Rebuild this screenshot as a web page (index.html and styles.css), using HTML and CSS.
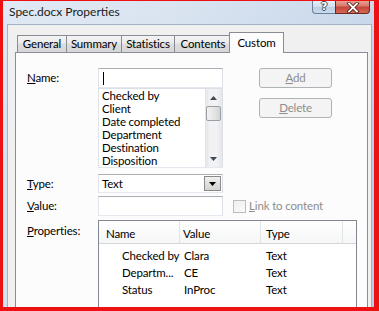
FILE: index.html
```html
<!DOCTYPE html>
<html>
<head>
<meta charset="utf-8">
<title>Spec.docx Properties</title>
<link rel="stylesheet" href="styles.css">
</head>
<body>
<div class="window">
  <div class="titlebar">
    <span class="title">Spec.docx Properties</span>
    <div class="caption-buttons">
      <div class="btn-help">?</div>
      <div class="btn-close">
        <svg width="14" height="11" viewBox="0 0 14 11">
          <path d="M3 1.5 L11 9.5 M11 1.5 L3 9.5" stroke="#4a1a14" stroke-width="3.4" stroke-linecap="square" fill="none"/>
          <path d="M3 1.5 L11 9.5 M11 1.5 L3 9.5" stroke="#ffffff" stroke-width="1.8" stroke-linecap="square" fill="none"/>
        </svg>
      </div>
    </div>
  </div>
  <div class="client">
    <div class="tabs">
      <div class="tab w-general">General</div>
      <div class="tab w-summary">Summary</div>
      <div class="tab w-statistics">Statistics</div>
      <div class="tab w-contents">Contents</div>
      <div class="tab selected">Custom</div>
    </div>
    <div class="panel">
      <div class="form">
        <div class="lbl lbl-name"><u>N</u>ame:</div>
        <div class="textbox name-box"><span class="caret"></span></div>
        <div class="actions">
          <div class="button"><u>A</u>dd</div>
          <div class="button"><u>D</u>elete</div>
        </div>
        <div class="listbox">
          <div class="items">
            <div>Checked by</div>
            <div>Client</div>
            <div>Date completed</div>
            <div>Department</div>
            <div>Destination</div>
            <div>Disposition</div>
          </div>
          <div class="vscroll">
            <div class="sb-arrow"><svg width="7" height="4" viewBox="0 0 7 4"><path d="M0 4 L3.5 0 L7 4 Z" fill="#404a58"/></svg></div>
            <div class="sb-thumb"></div>
            <div class="sb-track"></div>
            <div class="sb-arrow"><svg width="7" height="4" viewBox="0 0 7 4"><path d="M0 0 L7 0 L3.5 4 Z" fill="#404a58"/></svg></div>
          </div>
        </div>

        <div class="lbl row-type"><u>T</u>ype:</div>
        <div class="combo row-type">
          <span class="combo-text">Text</span>
          <div class="combo-btn"><svg width="7" height="4" viewBox="0 0 7 4"><path d="M0 0 L7 0 L3.5 4 Z" fill="#000"/></svg></div>
        </div>

        <div class="lbl row-value"><u>V</u>alue:</div>
        <div class="textbox row-value value-box"></div>
        <div class="check row-value">
          <span class="checkbox"></span>
          <span class="check-text"><u>L</u>ink to content</span>
        </div>

        <div class="lbl lbl-props"><u>P</u>roperties:</div>
        <div class="listview">
          <div class="lv-head">
            <div class="hc c-name">Name</div>
            <div class="hc c-value">Value</div>
            <div class="hc c-type">Type</div>
            <div class="hc c-rest"></div>
          </div>
          <div class="lv-body">
            <div class="lv-row"><span class="c-name">Checked by</span><span class="c-value">Clara</span><span class="c-type">Text</span></div>
            <div class="lv-row"><span class="c-name">Departm...</span><span class="c-value">CE</span><span class="c-type">Text</span></div>
            <div class="lv-row"><span class="c-name">Status</span><span class="c-value">InProc</span><span class="c-type">Text</span></div>
          </div>
        </div>
      </div>
    </div>
  </div>
</div>
</body>
</html>
```
FILE: styles.css
```css
* { box-sizing: border-box; }
html, body { margin: 0; padding: 0; }
body {
  width: 379px;
  height: 311px;
  overflow: hidden;
  background: #ee1111;
  font-family: Lato, "Open Sans", "Liberation Sans", sans-serif;
  font-size: 11.5px;
  letter-spacing: -0.15px;
  color: #000;
}
.window {
  margin: 1px 5px 0 3px;
  height: 306px;
  overflow: hidden;
  display: flex;
  flex-direction: column;
  background:
    linear-gradient(180deg, rgba(255,255,255,0.25), rgba(255,255,255,0) 55%),
    linear-gradient(90deg, #d6e2f0 0%, #cfdcec 45%, #b9cde6 100%);
}
.titlebar {
  height: 23px;
  flex-shrink: 0;
  display: flex;
  align-items: flex-start;
}
.title {
  padding: 3px 0 0 6px;
  line-height: 16px;
  font-size: 12px;
  letter-spacing: 0;
  color: #1b1b1b;
}
.caption-buttons {
  margin-left: auto;
  margin-right: 4px;
  display: flex;
  margin-top: -1px;
}
.btn-help {
  width: 23px;
  height: 14px;
  border: 1px solid #6f7f95;
  border-top: none;
  border-right: none;
  border-radius: 0 0 0 4px;
  background: linear-gradient(180deg, #eaf1f9 0%, #d3e0ef 50%, #b9cce3 51%, #c9dbef 100%);
  color: #fff;
  font-family: "DejaVu Sans", sans-serif;
  font-weight: bold;
  font-size: 11px;
  line-height: 13px;
  text-align: center;
  text-shadow: 1px 0 0 #3c4a5c, -1px 0 0 #3c4a5c, 0 1px 0 #3c4a5c, 0 -1px 0 #3c4a5c;
}
.btn-close {
  width: 35px;
  height: 14px;
  border: 1px solid #6b2a20;
  border-top: none;
  border-radius: 0 0 4px 0;
  background: linear-gradient(180deg, #e9a99c 0%, #d9796b 45%, #c4443a 55%, #d66a55 100%);
  display: flex;
  align-items: center;
  justify-content: center;
  padding-top: 1px;
}
.client {
  flex: 1;
  margin: 0 2px 0 4px;
  border: 1px solid #a3b3c7;
  border-bottom: none;
  background: #f0f0f0;
  padding: 7px 3px 0 7px;
  display: flex;
  flex-direction: column;
}
.tabs {
  display: flex;
  align-items: flex-start;
  height: 21px;
  padding-left: 2px;
  position: relative;
  z-index: 2;
}
.tab {
  height: 17px;
  margin-top: 3px;
  margin-right: -1px;
  border: 1px solid #898c95;
  border-bottom: none;
  background: linear-gradient(180deg, #f3f3f3 0%, #ebebeb 45%, #dddddd 50%, #d6d6d6 100%);
  text-align: center;
  line-height: 16px;
  white-space: nowrap;
}
.w-general { width: 50px; }
.w-summary { width: 56px; }
.w-statistics { width: 54px; }
.w-contents { width: 58px; }
.tab.selected {
  width: 55px;
  height: 21px;
  margin-top: 0;
  margin-left: -2px;
  background: #fcfcfc;
  line-height: 19px;
  position: relative;
  z-index: 3;
}
.panel {
  flex: 1;
  margin-top: -1px;
  border: 1px solid #898c95;
  background: #fcfcfc;
  position: relative;
  z-index: 1;
}
.form {
  display: grid;
  grid-template-columns: 71px 125px 1fr;
  padding: 15px 0 0 11px;
  align-items: center;
}
.lbl { line-height: 14px; white-space: nowrap; }
.lbl-name { grid-column: 1; grid-row: 1; }
.textbox {
  height: 20px;
  background: #fff;
  border: 1px solid;
  border-color: #abadb3 #dbdfe6 #e3e9ef #e2e3ea;
}
.name-box {
  grid-column: 2;
  grid-row: 1;
  display: flex;
  align-items: center;
  padding-left: 4px;
}
.caret {
  width: 1px;
  height: 13px;
  background: #000;
}
.actions {
  grid-column: 3;
  grid-row: 1 / 3;
  align-self: start;
  display: flex;
  flex-direction: column;
  gap: 10px;
  padding-left: 36px;
}
.button {
  width: 73px;
  height: 20px;
  border: 1px solid #adb2b5;
  border-radius: 3px;
  background: #f4f4f4;
  color: #8d8d8d;
  text-align: center;
  line-height: 18px;
}
.listbox {
  grid-column: 2;
  grid-row: 2;
  height: 80px;
  border: 1px solid;
  border-color: #dbdfe6 #dbdfe6 #e3e9ef #e2e3ea;
  background: #fff;
  display: flex;
}
.items {
  flex: 1;
  padding: 0 0 0 3px;
  line-height: 13px;
  overflow: hidden;
  white-space: nowrap;
}
.vscroll {
  width: 17px;
  display: flex;
  flex-direction: column;
  background: linear-gradient(90deg, #e3e3e6, #f2f2f4 30%, #f2f2f4 70%, #e6e6ea);
}
.sb-arrow {
  height: 17px;
  display: flex;
  align-items: center;
  justify-content: center;
}
.sb-thumb {
  height: 15px;
  margin: 0 1px;
  border: 1px solid #9b9ea5;
  border-radius: 2px;
  background: linear-gradient(90deg, #f2f2f2, #e6e6e6 50%, #d6d6d6);
}
.sb-track { flex: 1; }
.row-type { grid-row: 3; margin-top: 6px; }
.lbl.row-type { grid-column: 1; }
.combo {
  grid-column: 2;
  height: 19px;
  background: #fff;
  border: 1px solid;
  border-color: #abadb3 #dbdfe6 #e3e9ef #e2e3ea;
  display: flex;
  align-items: center;
  padding: 0 1px 0 3px;
}
.combo-text { flex: 1; line-height: 14px; }
.combo-btn {
  width: 17px;
  height: 15px;
  border: 1px solid #8a8a8a;
  background: linear-gradient(180deg, #f2f2f2, #e0e0e0 50%, #d4d4d4);
  display: flex;
  align-items: center;
  justify-content: center;
}
.row-value { grid-row: 4; margin-top: 3px; }
.lbl.row-value { grid-column: 1; }
.value-box { grid-column: 2; }
.check {
  grid-column: 3;
  display: flex;
  align-items: center;
  padding-left: 10px;
  color: #8d8d8d;
  white-space: nowrap;
}
.checkbox {
  width: 13px;
  height: 13px;
  border: 1px solid #bcbcbc;
  background: linear-gradient(135deg, #f0f0f0, #fafafa);
  margin-right: 3px;
}
.check-text { line-height: 14px; }
.lbl-props {
  grid-column: 1;
  grid-row: 5;
  align-self: start;
  margin-top: 4px;
  padding-top: 4px;
}
.listview {
  grid-column: 2 / 4;
  grid-row: 5;
  align-self: start;
  margin-top: 4px;
  width: 259px;
  height: 100px;
  border: 1px solid #828790;
  background: #fff;
}
.lv-head {
  display: grid;
  grid-template-columns: 81px 81px 82px 1fr;
  height: 23px;
  border-bottom: 1px solid #d5d5d5;
  background: linear-gradient(180deg, #ffffff, #f5f6f7);
}
.hc {
  border-right: 1px solid #e3e4e6;
  padding-top: 3px;
  line-height: 19px;
  white-space: nowrap;
}
.hc.c-rest { border-right: none; }
.hc.c-name { padding-left: 7px; }
.hc.c-value { padding-left: 3px; }
.hc.c-type { padding-left: 5px; }
.lv-body { padding-top: 3px; }
.lv-row {
  display: grid;
  grid-template-columns: 81px 81px 82px;
  height: 17px;
  line-height: 17px;
  white-space: nowrap;
}
.lv-row .c-name { padding-left: 23px; }
.lv-row .c-value { padding-left: 4px; }
.lv-row .c-type { padding-left: 5px; }
```
